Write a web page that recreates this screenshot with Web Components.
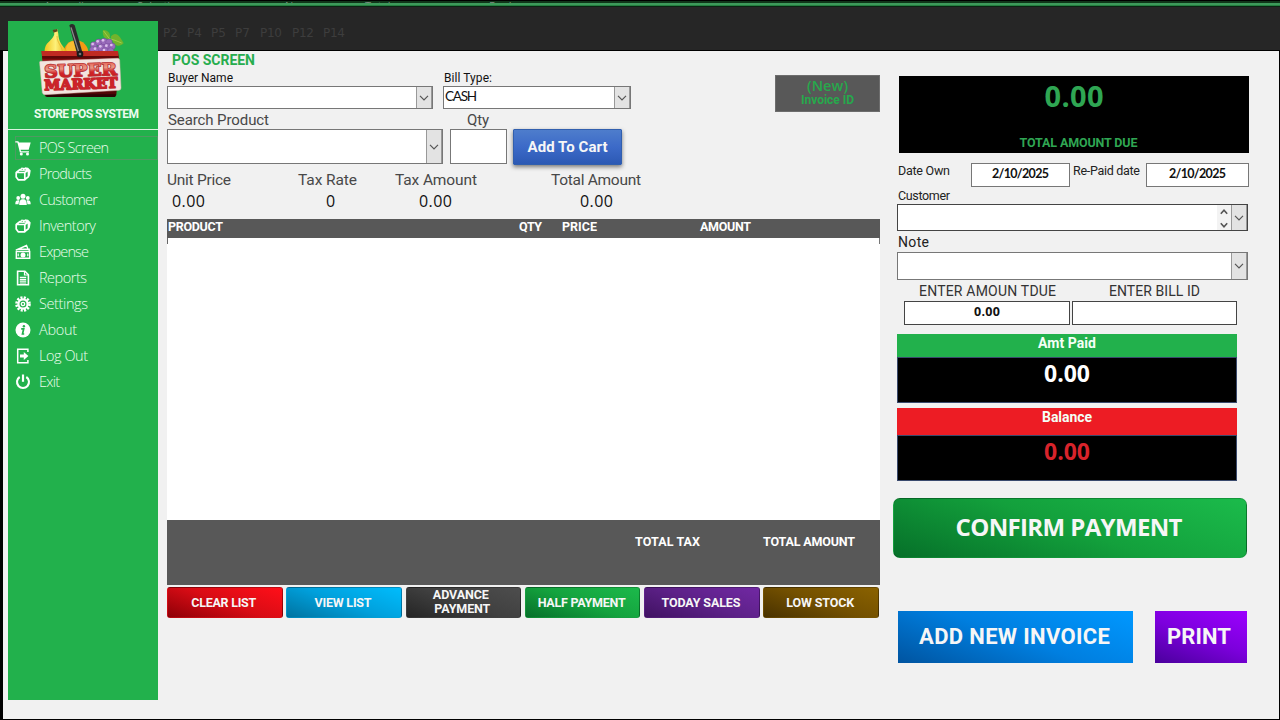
<!DOCTYPE html>
<html lang="en">
<head>
<meta charset="utf-8">
<title>Store POS System</title>
<style>
    html, body { margin: 0; height: 720px; overflow: hidden; background: #f1f1f1; }
</style>
</head>
<body>
<pos-app></pos-app>

<script>
// Base class: opens the shadow root and fills it with the markup of render()
class PosElement extends HTMLElement {
    constructor() {
        super();
        this.attachShadow({ mode: 'open' });
        this.shadowRoot.innerHTML = this.render();
    }
    attr(name, fallback = '') {
        return this.getAttribute(name) || fallback;
    }
}

class PosApp extends PosElement {
    render() {
        return `
            <style>
                :host {
                    display: flex;
                    flex-direction: column;
                    box-sizing: border-box;
                    width: 1280px;
                    height: 720px;
                    background: #f1f1f1;
                    font-family: Roboto, "Liberation Sans", sans-serif;
                    color: #222;
                }
                main {
                    flex: 1;
                    display: flex;
                    align-items: flex-start;
                    box-sizing: border-box;
                    border: solid #000;
                    border-width: 0 1px 1px 3px;
                    padding-left: 5px;
                    min-height: 0;
                }
                store-sidebar { margin-top: -30px; }
                sales-form { margin-left: 9px; }
                payment-panel { margin-left: 13px; }
            </style>
            <window-bar></window-bar>
            <main>
                <store-sidebar></store-sidebar>
                <sales-form></sales-form>
                <payment-panel></payment-panel>
            </main>
        `;
    }
}

class WindowBar extends PosElement {
    render() {
        return `
            <style>
                :host {
                    display: block;
                    box-sizing: border-box;
                    height: 51px;
                    background: #262626;
                    border-bottom: 1px solid #000;
                }
                /* strip of the covered ribbon, cut off by the window frame */
                .ribbon {
                    display: grid;
                    grid-template-columns: 44px 93px 148px 80px 124px 1fr;
                    align-items: end;
                    height: 3px;
                    overflow: hidden;
                    background: linear-gradient(#000 1px, #103519 1px);
                    font: 11px/11px "Open Sans", sans-serif;
                    color: #7c8a80;
                }
                .ribbon span { margin-bottom: -2px; }
                .frame {
                    height: 4px;
                    background: linear-gradient(#3d9a5b 0 2px, #23803f 2px 3px, #0b2413 3px);
                }
                .keys {
                    display: grid;
                    grid-template-columns: 24px 24px 24px 25px 32px 31px 30px;
                    padding: 18px 0 0 163px;
                    font: 12px/16px "DejaVu Sans", sans-serif;
                    color: #3d3d3d;
                }
            </style>
            <div class="ribbon">
                <span></span><span>Ascending</span><span>Selection</span><span>New</span><span>Totals</span><span>Replace</span>
            </div>
            <div class="frame"></div>
            <div class="keys">
                <text-label w="15">P2</text-label><text-label w="15">P4</text-label><text-label w="15">P5</text-label>
                <text-label w="15">P7</text-label><text-label w="22">P10</text-label><text-label w="22">P12</text-label>
                <text-label w="22">P14</text-label>
            </div>
        `;
    }
}

class MarketLogo extends PosElement {
    render() {
        return `
            <style>
                :host { display: block; width: 90px; height: 77px; }
                svg { display: block; }
            </style>
            <svg width="90" height="77" viewBox="111 66 270 231">
                <defs>
                    <linearGradient id="basket" x1="0" y1="0" x2="0" y2="1">
                        <stop offset="0" stop-color="#b3201c"/>
                        <stop offset=".12" stop-color="#8a1010"/>
                        <stop offset="1" stop-color="#4a0505"/>
                    </linearGradient>
                    <linearGradient id="banana" x1="0" y1="0" x2="1" y2="0">
                        <stop offset="0" stop-color="#f0c51c"/>
                        <stop offset=".5" stop-color="#fdf07a"/>
                        <stop offset="1" stop-color="#e9b411"/>
                    </linearGradient>
                    <linearGradient id="word" x1="0" y1="0" x2="0" y2="1">
                        <stop offset="0" stop-color="#e8473e"/>
                        <stop offset=".4" stop-color="#e89a86"/>
                        <stop offset=".6" stop-color="#d3252a"/>
                        <stop offset="1" stop-color="#c4161c"/>
                    </linearGradient>
                </defs>
                <circle cx="228" cy="158" r="37" fill="#f39a14"/>
                <circle cx="221" cy="147" r="23" fill="#f9bd31"/>
                <path d="M160 91l12-3 3 14c1 22 10 33 24 49l-4 10h-58c-5-6-3-17 1-25 7-12 23-21 25-34z" fill="url(#banana)"/>
                <path d="M171 108c1 24 14 27 16 47" fill="none" stroke="#dcae24" stroke-width="2"/>
                <path d="M158 90l13-3 2 7-12 4z" fill="#5d481a"/>
                <path d="M309 90c18 1 24 12 20 27-15 1-23-9-20-27zM332 110c13-15 24-9 39 20-13 13-30 10-39-20z" fill="#72b32c"/>
                <path d="M311 93l17 23 17 5 20 8" fill="none" stroke="#b6d958" stroke-width="2"/>
                <g fill="#9a6cbc" stroke="#653a8a" stroke-width="1">
                    <circle cx="281" cy="135" r="10"/><circle cx="296" cy="127" r="10"/><circle cx="312" cy="125" r="10"/>
                    <circle cx="327" cy="127" r="10"/><circle cx="287" cy="149" r="10"/><circle cx="304" cy="143" r="11"/>
                    <circle cx="322" cy="141" r="11"/><circle cx="336" cy="139" r="10"/><circle cx="277" cy="148" r="8"/>
                    <circle cx="315" cy="153" r="10"/><circle cx="332" cy="152" r="9"/>
                </g>
                <g fill="#dcc0ec">
                    <circle cx="278" cy="132" r="4"/><circle cx="293" cy="124" r="4"/><circle cx="309" cy="121" r="4"/>
                    <circle cx="301" cy="139" r="4"/><circle cx="319" cy="137" r="4"/><circle cx="334" cy="135" r="4"/>
                    <circle cx="285" cy="146" r="4"/><circle cx="312" cy="150" r="4"/>
                </g>
                <path d="M125 153h229l3 20-8 112q-2 6-9 6H143q-8 0-9-7z" fill="url(#basket)"/>
                <path d="M124 153h230v15H126z" fill="#c02a22"/>
                <path d="M126 168h229v8H127z" fill="#5e0808"/>
                <path d="M134 283h214l-3 8H141z" fill="#2c0404"/>
                <path d="M208 76q8-8 16 0l24 84q-3 12-15 8z" fill="#2b2b2b"/>
                <path d="M213 82l24 76" stroke="#8b8b8b" stroke-width="4"/>
                <circle cx="240" cy="162" r="10" fill="#191919"/><circle cx="240" cy="162" r="4" fill="#777"/>
                <path d="M121 184l232-9q5 0 6 5l4 84q0 6-6 7l-222 13q-6 0-8-6l-8-88q-1-6 2-6z" fill="#f3e4df" stroke="#d8b8b0" stroke-width="1.5"/>
                <g font-family="'DejaVu Serif', serif" font-weight="bold" stroke-linejoin="round" paint-order="stroke">
                    <text x="133" y="229" font-size="51" textLength="218" lengthAdjust="spacingAndGlyphs" transform="rotate(-2 240 220)" fill="url(#word)" stroke="#b5383a" stroke-width="5">SUPER</text>
                    <text x="133" y="267" font-size="43" textLength="220" lengthAdjust="spacingAndGlyphs" transform="rotate(-2 240 250)" fill="#cf2229" stroke="#c02a2e" stroke-width="5">MARKET</text>
                </g>
            </svg>
        `;
    }
}

// 16x16 glyphs of the side menu
const ICONS = {
    cart: `<path d="M.3 1.200h3l.7 1.300h11.700l-2 7.300H5.600l.4 1.400h8v1.300H4.900L2.400 2.600H.3z" fill="#fff"/><circle cx="6.300" cy="14" r="1.500" fill="#fff"/><circle cx="12.500" cy="14" r="1.500" fill="#fff"/>`,
    box: `<path d="M1.200 6.500h8.600v7.300H3.200L1.200 11zM1.200 6.500l3.600-2.800 8.400.3-3.400 2.500v7.200l3.700-3.200V4" fill="none" stroke="#fff" stroke-width="1.700" stroke-linejoin="round"/><path d="M4 4.600L6.600 1.400l3 .6.300-.8 3.200.6 2.600 2.600-.8 5-1.700 1.500V4.700z" fill="#fff"/><path d="M6.800 3.400h.9M9.600 3.800h1" stroke="#22b14c" stroke-width=".9"/>`,
    people: `<g fill="#fff"><circle cx="8" cy="4.200" r="2.500"/><circle cx="3.200" cy="6" r="1.900"/><circle cx="12.800" cy="6" r="1.900"/><path d="M4.200 13c0-3.700 1-5.700 3.800-5.700s3.800 2 3.800 5.700zM.3 12.300c0-2.600.6-4 2.900-4 .6 0 1 .1 1.300.4-.7 1-.9 2.200-.9 3.600zM15.700 12.300c0-2.600-.6-4-2.900-4-.6 0-1 .1-1.300.4.7 1 .9 2.200.9 3.600z"/></g>`,
    money: `<path d="M.8 6.200L11.500 1.500l1.300 3M3 5.300h11.200v2" fill="none" stroke="#fff" stroke-width="1.400"/><path d="M1.300 7.500h13.400v6.800H1.300z" fill="none" stroke="#fff" stroke-width="1.400"/><circle cx="8" cy="10.900" r="2.500" fill="#fff"/><path d="M3.200 9.500v2.800M12.800 9.500v2.800" stroke="#fff" stroke-width="1.200"/>`,
    report: `<path d="M2.600 1.200h7.300l3.500 3.600v10H2.600z" fill="none" stroke="#fff" stroke-width="1.600"/><path d="M9.500 1.200V5h4" fill="none" stroke="#fff" stroke-width="1.200"/><path d="M4.800 7.400h6.400M4.800 9.300h6.400M4.800 11.200h6.400M4.800 13h6.400" stroke="#fff" stroke-width="1.200"/>`,
    gear: `<circle cx="8" cy="8" r="6.500" fill="none" stroke="#fff" stroke-width="2.600" stroke-dasharray="2.100 1.303"/><circle cx="8" cy="8" r="4.600" fill="none" stroke="#fff" stroke-width="2.200"/><circle cx="8" cy="8" r="1.700" fill="none" stroke="#fff" stroke-width="1.300"/>`,
    info: `<circle cx="8" cy="8" r="7.500" fill="#fff"/><path d="M6.200 6.800h2.500L7.500 12h1.700" fill="none" stroke="#22b14c" stroke-width="1.700"/><circle cx="8.900" cy="4.200" r="1.200" fill="#22b14c"/>`,
    logout: `<path d="M12.900 4V1.200H2.700v13.600h10.200V12" fill="none" stroke="#fff" stroke-width="1.500"/><path d="M5 6.600h3.800V4l4.600 4-4.600 4V9.400H5z" fill="#fff"/>`,
    power: `<path d="M4.700 3a6 6 0 1 0 6.600 0" fill="none" stroke="#fff" stroke-width="2.100"/><path d="M8 .5v7.300" stroke="#fff" stroke-width="2.200"/>`
};

class NavItem extends PosElement {
    render() {
        return `
            <style>
                :host {
                    display: flex;
                    align-items: center;
                    box-sizing: border-box;
                    height: 26px;
                    padding-left: 7px;
                    font: 300 14.500px/20px "Open Sans", "Noto Sans", sans-serif;
                    color: #eafded;
                }
                .box {
                    flex: 1;
                    display: flex;
                    align-items: center;
                    gap: 8px;
                    height: 24px;
                }
                :host([active]) .box { box-shadow: inset 0 0 0 1px #4f9a62; }
                svg { width: 16px; height: 16px; flex: none; }
            </style>
            <div class="box">
                <svg viewBox="0 0 16 16">${ICONS[this.attr('icon')]}</svg>
                <slot></slot>
            </div>
        `;
    }
}

class StoreSidebar extends PosElement {
    render() {
        const items = [
            ['cart', 'POS Screen', 70], ['box', 'Products', 53], ['people', 'Customer', 59],
            ['box', 'Inventory', 57], ['money', 'Expense', 50], ['report', 'Reports', 48],
            ['gear', 'Settings', 49], ['info', 'About', 38], ['logout', 'Log Out', 49], ['power', 'Exit', 21]
        ];
        return `
            <style>
                :host {
                    display: block;
                    flex: none;
                    box-sizing: border-box;
                    width: 150px;
                    height: 679px;
                    background: #22b14c;
                }
                market-logo { margin-left: 29px; padding-top: 1px; }
                .name {
                    margin: 7px 0 7px 26px;
                    height: 16px;
                    font-size: 12px;
                    line-height: 17px;
                    font-weight: 700;
                    color: #ebfbee;
                }
                .rule { height: 1px; background: #d9f3df; margin-bottom: 5px; }
            </style>
            <market-logo></market-logo>
            <div class="name"><text-label w="105">STORE POS SYSTEM</text-label></div>
            <div class="rule"></div>
            ${items.map(([icon, text, w], i) => `<nav-item icon="${icon}" ${i === 0 ? 'active' : ''}><text-label w="${w}">${text}</text-label></nav-item>`).join('')}
        `;
    }
}

class EntryBox extends PosElement {
    render() {
        return `
            <style>
                :host {
                    display: flex;
                    flex: none;
                    box-sizing: border-box;
                    background: #fff;
                    border: 1px solid #777;
                }
                .value { flex: 1; display: flex; }
                :host([center]) .value { justify-content: center; }
                .spin, .drop {
                    display: flex;
                    align-items: center;
                    justify-content: center;
                    box-sizing: border-box;
                    flex: none;
                }
                .drop { width: 16px; background: #e3e3e3; border: 1px solid #999; border-width: 0 1px 0 1px; }
                .spin { width: 14px; background: #f3f3f3; flex-direction: column; justify-content: space-between; padding: 4px 0 2px; }
                svg { display: block; fill: none; stroke: #555; }
            </style>
            <div class="value"><slot></slot></div>
            ${this.hasAttribute('spin') ? `
                <div class="spin">
                    <svg width="8" height="6" stroke-width="1.600"><path d="M.8 4.800L4 1.300l3.200 3.500"/></svg>
                    <svg width="8" height="6" stroke-width="1.600"><path d="M.8 1.200L4 4.700l3.200-3.500"/></svg>
                </div>` : ''}
            ${this.hasAttribute('drop') ? `
                <div class="drop"><svg width="10" height="6" stroke-width="1.200"><path d="M1 .8l4 4 4-4"/></svg></div>` : ''}
        `;
    }
}

class PosButton extends PosElement {
    render() {
        return `
            <style>
                :host {
                    display: flex;
                    flex: none;
                    align-items: center;
                    justify-content: center;
                    box-sizing: border-box;
                    color: #f6f6f6;
                    font-weight: 700;
                    background: linear-gradient(20deg, ${this.attr('from')}, ${this.attr('mid')} 50%, ${this.attr('to')});
                }
            </style>
            <slot></slot>
        `;
    }
}

class InvoiceBadge extends PosElement {
    render() {
        return `
            <style>
                :host {
                    display: flex;
                    flex-direction: column;
                    align-items: center;
                    flex: none;
                    box-sizing: border-box;
                    width: 105px;
                    height: 37px;
                    padding-top: 1px;
                    background: #585858;
                    border: 1px solid #6d6d6d;
                    color: #27a84c;
                }
                .state { font: 600 14.500px/17px "Open Sans", sans-serif; }
                .id { font-size: 12px; line-height: 13px; font-weight: 700; }
            </style>
            <text-label class="state" w="41">(New)</text-label>
            <text-label class="id" w="53">Invoice ID</text-label>
        `;
    }
}

class ProductTable extends PosElement {
    render() {
        return `
            <style>
                :host {
                    display: block;
                    width: 713px;
                    font-size: 12.500px;
                    line-height: 15px;
                    font-weight: 700;
                    color: #fff;
                }
                header, footer { display: grid; box-sizing: border-box; background: #585858; }
                header { grid-template-columns: 351px 43px 138px 1fr; height: 19px; padding-left: 1px; }
                .rows { height: 282px; background: linear-gradient(#666, #666) 0 0 / 1px 6px no-repeat, linear-gradient(#777, #777) 100% 0 / 1px 6px no-repeat, #fff; }
                footer { grid-template-columns: 128px 1fr; height: 65px; padding: 14px 0 0 468px; }
                .actions { display: grid; grid-template-columns: repeat(6, 115.500px); gap: 3.800px; padding-top: 2px; }
                pos-button { height: 31px; padding-right: 2px; border-radius: 3px; border: 1px solid rgba(0, 0, 0, .12); }
                .two { display: grid; justify-items: center; line-height: 14px; margin: -1px 3px 0 0; }
                .two text-label:last-child { margin-left: 3px; }
            </style>
            <header>
                <text-label w="55">PRODUCT</text-label><text-label w="23">QTY</text-label>
                <text-label w="35">PRICE</text-label><text-label w="51">AMOUNT</text-label>
            </header>
            <div class="rows"></div>
            <footer><text-label w="65">TOTAL TAX</text-label><text-label w="92">TOTAL AMOUNT</text-label></footer>
            <div class="actions">
                <pos-button from="#8e0007" mid="#d80c15" to="#ff0f19"><text-label w="65">CLEAR LIST</text-label></pos-button>
                <pos-button from="#0073a0" mid="#00a0dc" to="#00bcfc"><text-label w="57">VIEW LIST</text-label></pos-button>
                <pos-button from="#252525" mid="#404040" to="#4d4d4d"><div class="two"><text-label w="56">ADVANCE</text-label><text-label w="56">PAYMENT</text-label></div></pos-button>
                <pos-button from="#07702b" mid="#14a33e" to="#1cb94b"><text-label w="88">HALF PAYMENT</text-label></pos-button>
                <pos-button from="#401262" mid="#5d2188" to="#7128a3"><text-label w="79">TODAY SALES</text-label></pos-button>
                <pos-button from="#493200" mid="#735000" to="#8a6200"><text-label w="68">LOW STOCK</text-label></pos-button>
            </div>
        `;
    }
}

class SalesForm extends PosElement {
    render() {
        return `
            <style>
                :host { display: block; flex: none; width: 713px; }
                .top { display: flex; }
                .entry { width: 608px; height: 168px; }
                invoice-badge { margin-top: 24px; }
                .row { display: grid; align-items: center; }
                .title { height: 18px; padding-left: 5px; font-size: 14px; line-height: 18px; font-weight: 700; color: #27ad4e; }
                .small { height: 17px; padding-left: 1px; grid-template-columns: 276px 1fr; font-size: 12px; color: #111; }
                .combos { display: flex; gap: 10px; }
                .mid { height: 20px; padding: 1px 0 0 1px; box-sizing: border-box; grid-template-columns: 299px 1fr; font-size: 15px; color: #484848; }
                .search { display: flex; height: 35px; }
                .sums { grid-template-columns: 131px 97px 156px 1fr; height: 31px; font-size: 15.500px; color: #484848; }
                .vals { grid-template-columns: 154px 93px 161px 1fr; height: 12px; padding-left: 5px; font: 16px/12px "Open Sans", sans-serif; color: #111; }
                .cash { padding-left: 1px; font: 13.500px/19px Lato, sans-serif; color: #111; }
                pos-button { width: 109px; height: 36px; margin-left: 6px; font-size: 15px; border-radius: 1px; border: 1px solid #315fae; box-shadow: 0 2px 4px rgba(0, 0, 0, .5); background: linear-gradient(#4e7dcc, #3c6ac8 50%, #2c59b4); }
            </style>
            <div class="top">
                <div class="entry">
                    <div class="row title"><text-label w="83">POS SCREEN</text-label></div>
                    <div class="row small"><text-label w="65">Buyer Name</text-label><text-label w="48">Bill Type:</text-label></div>
                    <div class="combos">
                        <entry-box drop style="width:266px;height:23px"></entry-box>
                        <entry-box drop style="width:188px;height:23px"><text-label class="cash" w="32">CASH</text-label></entry-box>
                    </div>
                    <div class="row mid"><text-label w="101">Search Product</text-label><text-label w="22">Qty</text-label></div>
                    <div class="search">
                        <entry-box drop style="width:276px"></entry-box>
                        <entry-box style="width:57px;margin-left:7px"></entry-box>
                        <pos-button><text-label w="80">Add To Cart</text-label></pos-button>
                    </div>
                    <div class="row sums">
                        <text-label w="64">Unit Price</text-label><text-label w="59">Tax Rate</text-label>
                        <text-label w="82">Tax Amount</text-label><text-label w="90">Total Amount</text-label>
                    </div>
                    <div class="row vals">
                        <text-label w="33">0.00</text-label><text-label w="9">0</text-label>
                        <text-label w="33">0.00</text-label><text-label w="33">0.00</text-label>
                    </div>
                </div>
                <invoice-badge></invoice-badge>
            </div>
            <product-table></product-table>
        `;
    }
}

class AmountCard extends PosElement {
    render() {
        return `
            <style>
                :host { display: block; width: 340px; text-align: center; box-sizing: border-box; }
                .head {
                    height: var(--head);
                    background: ${this.attr('fill')};
                    box-sizing: border-box;
                    font-size: 14px;
                    line-height: 18px;
                    font-weight: 700;
                    color: #f4fff6;
                }
                .sum {
                    box-sizing: border-box;
                    height: 46px;
                    background: #000;
                    border: 1px solid #3a4a6d;
                    font: 700 23px/31px "Open Sans", sans-serif;
                    color: ${this.attr('ink')};
                }
            </style>
            <div class="head"><slot></slot></div>
            <div class="sum"><text-label w="46">0.00</text-label></div>
        `;
    }
}

class PaymentPanel extends PosElement {
    render() {
        return `
            <style>
                :host { display: block; flex: none; width: 356px; padding-top: 25px; font-size: 12.500px; }
                .due {
                    display: flex;
                    flex-direction: column;
                    align-items: center;
                    justify-content: space-between;
                    box-sizing: border-box;
                    width: 350px;
                    height: 77px;
                    margin-left: 6px;
                    padding: 4px 0 2px;
                    background: #000;
                    color: #2fa653;
                }
                .due .sum { font: 700 29px/31px "Open Sans", sans-serif; }
                .due .cap { font-size: 12.500px; line-height: 16px; font-weight: 700; margin-left: 9px; }
                .dates { display: grid; grid-template-columns: 73px 99px 3px 73px 103px; height: 25px; margin: 10px 0 0 5px; }
                .dates > text-label { line-height: 15px; }
                .dates entry-box { height: 24px; font: 700 12.500px/19px Lato, sans-serif; color: #111; }
                .line { padding-left: 5px; line-height: 16px; height: 16px; }
                .wide { width: 351px; margin-left: 4px; }
                .note { font-size: 14px; line-height: 23px; height: 21px; }
                .ids { display: grid; grid-template-columns: 190px 1fr; padding-left: 26px; font-size: 14px; line-height: 22px; height: 21px; color: #333; }
                .boxes { display: flex; gap: 2px; padding-left: 11px; }
                .boxes entry-box { height: 24px; border-color: #444; font: 700 12.500px/19px "Open Sans", sans-serif; color: #111; }
                amount-card { margin-left: 4px; }
                .confirm { width: 354px; height: 60px; margin-top: 17px; padding: 0 2px 2px 0; border-radius: 7px; font: 700 24px/32px "Open Sans", sans-serif; border: 1px solid rgba(0, 0, 0, .1); }
                .bottom { display: flex; justify-content: space-between; margin: 53px 2px 0 5px; font-size: 22px; }
                .bottom pos-button { height: 52px; padding: 0 2px 1px 0; }
            </style>
            <div class="due">
                <text-label class="sum" w="59">0.00</text-label>
                <text-label class="cap" w="118">TOTAL AMOUNT DUE</text-label>
            </div>
            <div class="dates">
                <text-label w="52">Date Own</text-label>
                <entry-box center><text-label w="57">2/10/2025</text-label></entry-box>
                <span></span>
                <text-label w="67">Re-Paid date</text-label>
                <entry-box center><text-label w="57">2/10/2025</text-label></entry-box>
            </div>
            <div class="line"><text-label w="52">Customer</text-label></div>
            <entry-box class="wide" spin drop style="height:27px;border-color:#444"></entry-box>
            <div class="line note"><text-label w="31">Note</text-label></div>
            <entry-box class="wide" drop style="height:28px"></entry-box>
            <div class="ids"><text-label w="137">ENTER AMOUN TDUE</text-label><text-label w="91">ENTER BILL ID</text-label></div>
            <div class="boxes">
                <entry-box center style="width:166px"><text-label w="26">0.00</text-label></entry-box>
                <entry-box style="width:165px"></entry-box>
            </div>
            <amount-card fill="#22b14c" ink="#fff" style="--head:23px;margin-top:9px"><text-label w="58">Amt Paid</text-label></amount-card>
            <amount-card fill="#ed1c24" ink="#d8232b" style="--head:27px;margin-top:5px"><text-label w="50">Balance</text-label></amount-card>
            <pos-button class="confirm" from="#067029" mid="#13a03c" to="#1bbb4b"><text-label w="227">CONFIRM PAYMENT</text-label></pos-button>
            <div class="bottom">
                <pos-button from="#0054a0" mid="#007fe0" to="#0098ff" style="width:235px"><text-label w="191">ADD NEW INVOICE</text-label></pos-button>
                <pos-button from="#4a009c" mid="#7c00dc" to="#9c00ff" style="width:92px"><text-label w="64" style="margin-right:2px">PRINT</text-label></pos-button>
            </div>
        `;
    }
}

// Text tracked out (or in) to the width given in w
class TextLabel extends PosElement {
    render() {
        return `
            <style>
                :host { display: inline-block; flex: none; white-space: nowrap; text-align: left; }
            </style>
            <span><slot></slot></span>
        `;
    }
    connectedCallback() {
        const w = Number(this.attr('w', '0'));
        const span = this.shadowRoot.querySelector('span');
        const count = this.textContent.length;
        this.style.width = w + 'px';
        if (count > 1) {
            const natural = span.getBoundingClientRect().width;
            span.style.letterSpacing = (w - natural) / (count - 1) + 'px';
        }
    }
}

// Containers go first so that every label is measured in its final font
customElements.define('pos-app', PosApp);
customElements.define('window-bar', WindowBar);
customElements.define('store-sidebar', StoreSidebar);
customElements.define('market-logo', MarketLogo);
customElements.define('nav-item', NavItem);
customElements.define('sales-form', SalesForm);
customElements.define('payment-panel', PaymentPanel);
customElements.define('product-table', ProductTable);
customElements.define('invoice-badge', InvoiceBadge);
customElements.define('amount-card', AmountCard);
customElements.define('entry-box', EntryBox);
customElements.define('pos-button', PosButton);
customElements.define('text-label', TextLabel);
</script>
</body>
</html>
